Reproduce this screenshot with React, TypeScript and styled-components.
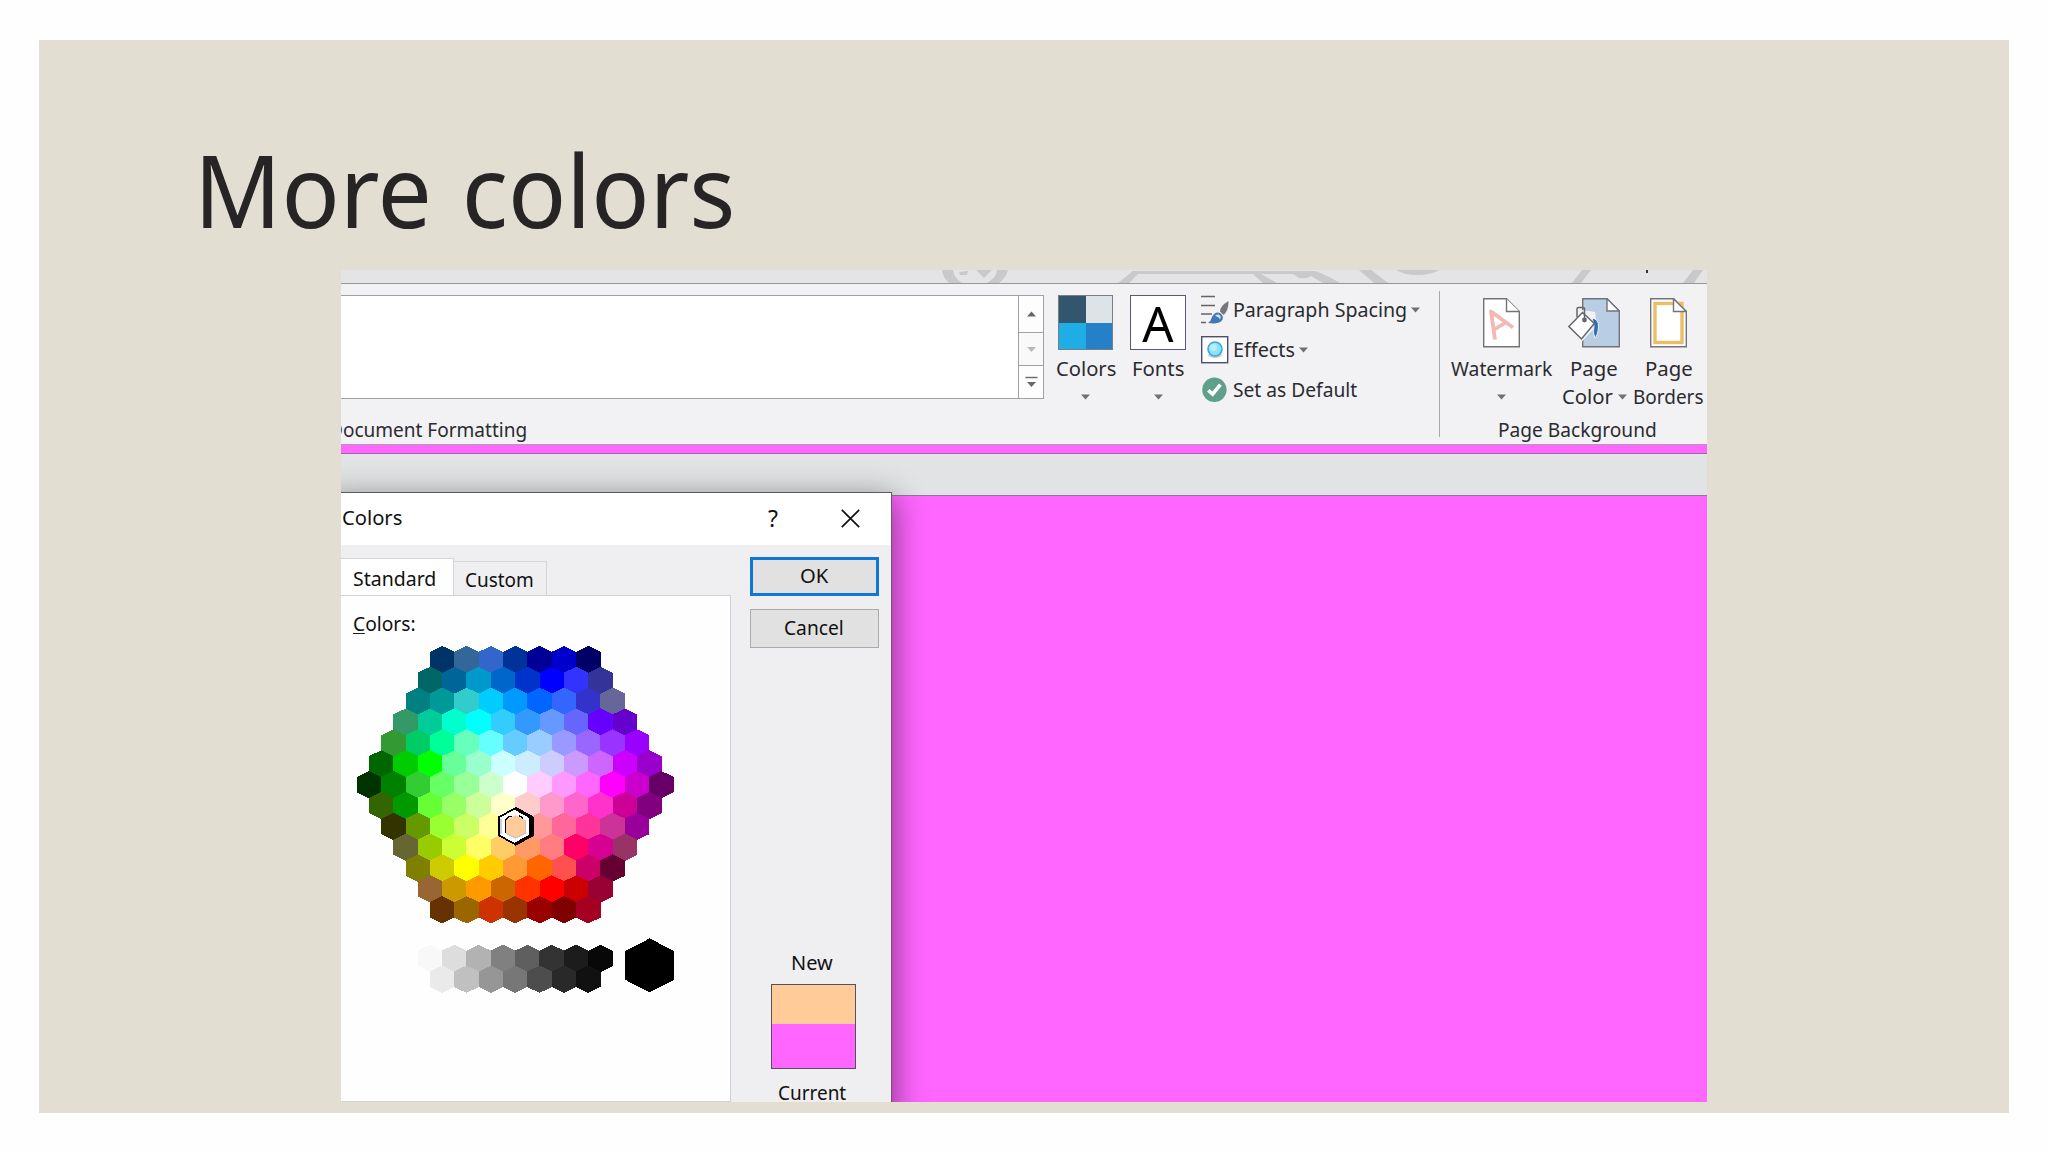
import React, { useLayoutEffect, useRef, useState } from "react";
import styled, { createGlobalStyle } from "styled-components";

const GlobalStyle = createGlobalStyle`
  * { box-sizing: border-box; }
  html, body { margin: 0; padding: 0; background: #fefefe; }
  body { font-family: "Noto Sans", "Open Sans", sans-serif; color: #262626; overflow: hidden; }
`;

const Page = styled.div`
  width: 2048px;
  height: 1152px;
  padding: 40px 39px;
  background: #fefefe;
`;

const Slide = styled.main`
  width: 1970px;
  height: 1073px;
  padding: 89px 0 0 154px;
  background: #e2ded1;
`;

const Title = styled.h1`
  margin: 0 0 21px;
  padding-left: 1px;
  font-size: 101px;
  line-height: 120px;
  font-weight: 400;
  word-spacing: 5px;
  color: #262424;
`;

const Picture = styled.section`
  position: relative;
  width: 1366px;
  height: 832px;
  margin-left: 148px;
  overflow: hidden;
  display: flex;
  flex-direction: column;
  background: #ff66ff;
`;

/* ---------- text fitted to a set width ---------- */

const FitBox = styled.span`
  display: inline-block;
  flex: none;
  white-space: nowrap;
  text-align: left;
`;
const FitInner = styled.span`
  display: inline-block;
  transform-origin: 0 50%;
`;

function Fit({ w, children }: { w: number; children: React.ReactNode }) {
  const ref = useRef<HTMLSpanElement>(null);
  const [scale, setScale] = useState(1);
  useLayoutEffect(() => {
    if (ref.current) setScale(w / ref.current.offsetWidth);
  }, [w]);
  return (
    <FitBox style={{ width: w }}>
      <FitInner ref={ref} style={{ transform: `scaleX(${scale})` }}>
        {children}
      </FitInner>
    </FitBox>
  );
}

/* ---------- ribbon ---------- */

const TopStrip = styled.div`
  flex: none;
  height: 14px;
  background: #e4e4e7;
  border-bottom: 1px solid #97979b;
  svg { display: block; }
`;

const Ribbon = styled.div`
  flex: none;
  height: 161px;
  display: flex;
  background: #f2f2f5;
  border-bottom: 1px solid #a99fae;
  font-size: 19.5px;
  line-height: 28px;
  color: #2b2b2f;
`;

const Group = styled.div<{ $width: number }>`
  width: ${(p) => p.$width}px;
  flex: none;
  padding-top: 11px;
  display: flex;
  flex-direction: column;
`;

const Tools = styled.div<{ $pad?: number }>`
  height: 121px;
  flex: none;
  display: flex;
  padding-left: ${(p) => p.$pad ?? 0}px;
`;

const Caption = styled.div<{ $indent: number }>`
  height: 28px;
  margin-left: ${(p) => p.$indent}px;
`;

const GroupRule = styled.div`
  width: 1px;
  flex: none;
  height: 146px;
  margin-top: 7px;
  background: #a9a9ad;
`;

const Gallery = styled.div`
  width: 703px;
  height: 104px;
  flex: none;
  margin-right: 6px;
  display: flex;
  border: 1px solid #a0a0a5;
  border-left: 0;
  background: #fff;
`;

const Spinner = styled.div`
  margin-left: auto;
  width: 25px;
  display: flex;
  flex-direction: column;
  border-left: 1px solid #a0a0a5;
`;

const SpinButton = styled.div<{ $height: number; $dim?: boolean }>`
  height: ${(p) => p.$height}px;
  display: flex;
  align-items: center;
  justify-content: center;
  background: ${(p) => (p.$dim ? "#f9f9fa" : "#fdfdfd")};
  & + & { border-top: 1px solid #a0a0a5; }
`;

const BigButton = styled.div<{ $width: number }>`
  width: ${(p) => p.$width}px;
  flex: none;
  display: flex;
  flex-direction: column;
  align-items: center;
`;

const IconSlot = styled.div`
  height: 55px;
  margin-bottom: 5px;
  display: flex;
  align-items: center;
  justify-content: center;
`;

const Line = styled.div`
  height: 28px;
  display: flex;
  align-items: center;
  justify-content: center;
  gap: 5px;
`;

const ColorGrid = styled.div`
  width: 55px;
  height: 55px;
  display: grid;
  grid-template-columns: 1fr 1fr;
  grid-template-rows: 1fr 1fr;
  border: 1px solid #7a7d83;
`;
const Tile = styled.span<{ $color: string }>`
  background: ${(p) => p.$color};
`;

const FontTile = styled.div`
  width: 56px;
  height: 55px;
  border: 1px solid #5a5874;
  background: #fff;
  color: #000;
  text-align: center;
  font-size: 49px;
  line-height: 54px;
`;

const CommandList = styled.div`
  margin: -5px 0 0 6px;
  display: flex;
  flex-direction: column;
`;
const Command = styled.div`
  height: 40px;
  display: flex;
  align-items: center;
  gap: 4px;
  svg { flex: none; }
`;
const CommandText = styled.span`
  display: flex;
  align-items: center;
  gap: 4px;
`;

const AccentBar = styled.div`
  flex: none;
  height: 9px;
  background: #ff66ff;
  border-bottom: 1px solid #9a6a9e;
`;
const GrayBar = styled.div`
  flex: none;
  height: 42px;
  background: #e2e3e5;
  border-bottom: 1px solid #8a7a8e;
`;

/* ---------- dialog ---------- */

const Dialog = styled.div`
  position: absolute;
  left: -20px;
  top: 222px;
  width: 571px;
  height: 680px;
  padding-left: 20px;
  display: flex;
  flex-direction: column;
  background: #efeff2;
  border: 1px solid #5a5a5e;
  border-right-color: #76507c;
  box-shadow: 3px 6px 30px rgba(0, 0, 0, 0.46);
  font-size: 19.5px;
  line-height: 28px;
  color: #111;
`;

const TitleBar = styled.header`
  height: 52px;
  flex: none;
  margin-left: -20px;
  padding: 0 31px 2px 20px;
  display: flex;
  align-items: center;
  background: #fff;
`;
const Help = styled.span`
  margin-left: auto;
  margin-right: 63px;
  font-size: 23px;
`;

const DialogBody = styled.div`
  flex: 1;
  display: flex;
  margin-left: -1px;
`;

const TabArea = styled.div`
  width: 390px;
  flex: none;
  padding-top: 13px;
  display: flex;
  flex-direction: column;
`;
const TabRow = styled.div`
  height: 37px;
  display: flex;
  align-items: flex-end;
`;
const ActiveTab = styled.div`
  width: 113px;
  height: 38px;
  padding: 6px 0 0 12px;
  margin-bottom: -1px;
  background: #fff;
  border: 1px solid #d6d6da;
  border-width: 1px 1px 0 0;
`;
const IdleTab = styled.div`
  width: 93px;
  height: 34px;
  padding: 4px 0 0 11px;
  border: 1px solid #d6d6da;
  border-width: 1px 1px 0 0;
`;
const TabPanel = styled.div`
  height: 507px;
  padding: 14px 0 0 12px;
  background: #fefefe;
  border: 1px solid #d2d2d6;
  border-left: 0;
  svg { display: block; margin: 7px 0 0 -12px; }
`;
const Accel = styled.span`
  box-shadow: 0 -1px 0 #222 inset;
  display: inline-block;
  height: 24px;
  line-height: 28px;
`;

const Side = styled.div`
  flex: 1;
  padding: 12px 13px 0 19px;
  display: flex;
  flex-direction: column;
  align-items: center;
`;
const PushButton = styled.div<{ $primary?: boolean }>`
  width: 129px;
  height: 39px;
  flex: none;
  margin-bottom: 13px;
  display: flex;
  align-items: center;
  justify-content: center;
  padding: 0 1px 1px 0;
  background: #e1e1e2;
  border: ${(p) => (p.$primary ? "3px solid #0e78d4" : "1px solid #aaaaad")};
`;
const Preview = styled.div`
  margin-top: 288px;
  margin-left: -5px;
  display: flex;
  flex-direction: column;
  align-items: center;
`;
const Swatch = styled.div`
  width: 85px;
  height: 85px;
  margin: 7px 0 10px 3px;
  border: 1px solid #55505c;
  background: linear-gradient(#ffcc99 0 39px, #ff66ff 39px);
`;

/* ---------- drawings ---------- */

function Arrow({ up, dim, bar }: { up?: boolean; dim?: boolean; bar?: boolean }) {
  const c = dim ? "#b9b9bd" : "#68686c";
  return (
    <svg width="13" height="14" viewBox="0 0 13 14">
      {bar && <path d="M0.5 2.5H12.5" stroke={c} strokeWidth="1.4" />}
      <path d={up ? "M2 9.5H11L6.5 4.5Z" : bar ? "M2 7H11L6.5 12Z" : "M2 5H11L6.5 10Z"} fill={c} />
    </svg>
  );
}

function SmallArrow() {
  return (
    <svg width="9" height="6" viewBox="0 0 9 6">
      <path d="M0 0.5H9L4.5 5.5Z" fill="#707074" />
    </svg>
  );
}

function StripArt() {
  return (
    <svg width="1366" height="13" viewBox="0 0 1366 13" fill="none">
      <g fill="#c9c9cc">
        <path d="M601 0H612Q613 8 621 13H608Q602 8 601 0Z" />
        <path d="M618 2L627 1L626 5L619 5Z" />
        <path d="M635 0H651L643 8Z" />
        <path d="M656 0H667Q665 8 658 13H646Q655 8 656 0Z" />
        <path d="M777 13L792 1H974Q986 5 999 13H982L970 6Q966 9 958 8L952 4H920L936 13H922L912 4H797L788 13Z" />
        <path d="M1018 0H1030L1047 13H1033Z" />
        <path d="M1055 0H1098Q1090 5 1076 5Q1063 5 1055 0Z" />
        <path d="M1231 13L1241 0H1250L1240 13Z" />
        <path d="M1342 13L1352 0H1362L1353 13Z" />
      </g>
      <path d="M1306 0V3" stroke="#333" strokeWidth="2" />
    </svg>
  );
}

function ParagraphIcon() {
  return (
    <svg width="28" height="30" viewBox="0 0 28 30" fill="none">
      <path d="M0 1.5H14M0 10.5H14M0 19H11M0 27.5H5" stroke="#66666a" strokeWidth="1.6" />
      <path d="M27.5 6Q19 11 19 16.5L22.5 20Q27.5 16 27.5 6Z" fill="#77777b" />
      <path d="M7 28Q10 26 11 22Q14 16 19 18Q24 22 20.5 26Q17 29.5 7 28Z" fill="#4277b3" />
      <path d="M14 21Q17 18.5 19 20.5Q20.5 22 19 24.5Q18 21.5 14 21Z" fill="#d9e8f5" />
    </svg>
  );
}

function EffectsIcon() {
  return (
    <svg width="28" height="28" viewBox="0 0 28 28">
      <rect x="0.7" y="0.7" width="26" height="26" fill="#fff" stroke="#4f4d6c" strokeWidth="1.4" />
      <ellipse cx="14" cy="19" rx="7" ry="3" fill="#cfcfd4" />
      <circle cx="14" cy="13" r="7" fill="#8fe0fb" stroke="#38a9dd" strokeWidth="1.6" />
      <circle cx="12.5" cy="11.5" r="3.6" fill="#b5effd" />
    </svg>
  );
}

function CheckIcon() {
  return (
    <svg width="28" height="26" viewBox="0 0 28 26">
      <circle cx="13.4" cy="12.8" r="12.2" fill="#5fa08a" />
      <path d="M7.3 13.2L11.6 17.2L19.4 7.6" fill="none" stroke="#fff" strokeWidth="3.6" />
    </svg>
  );
}

function WatermarkIcon() {
  return (
    <svg width="37" height="50" viewBox="0 0 37 50" fill="none">
      <path d="M0.7 0.7H23.5L36.3 13.5V48.8H0.7Z" fill="#fff" stroke="#737377" strokeWidth="1.4" />
      <path d="M23.5 0.7V13.5H36.3" fill="#fff" stroke="#737377" strokeWidth="1.4" />
      <path d="M12 41.5L8 13.5L30 29.5M10.5 32L23.5 24" stroke="#f2b8b1" strokeWidth="3.8" strokeLinejoin="round" />
    </svg>
  );
}

function PageColorIcon() {
  return (
    <svg width="52" height="50" viewBox="0 0 52 50" fill="none">
      <path d="M14.7 0.7H39L51.3 13V48.8H14.7Z" fill="#b9cee4" stroke="#737377" strokeWidth="1.4" />
      <path d="M39 0.7V13H51.3Z" fill="#fff" stroke="#737377" strokeWidth="1.4" />
      <path d="M13 42L29 28L27 14L14 12Z" fill="#f2f2f5" />
      <path d="M-1 29L13 13L29 27L13.5 44Z" fill="#f2f2f5" />
      <path d="M24 20Q31 21 30.5 29Q30 37 27 40Q24 34 26 28Z" fill="#2a72b5" stroke="#f2f2f5" strokeWidth="1" />
      <path d="M0.9 28.5L14.5 14.5L26.3 25.5L13.5 41Z" fill="#fff" stroke="#66666a" strokeWidth="1.5" />
      <path d="M9 19V11Q9 9.5 10.5 9.5H15Q16.5 9.5 16.5 11V21" stroke="#66666a" strokeWidth="1.5" />
      <circle cx="16.5" cy="22" r="2.4" fill="#66666a" />
    </svg>
  );
}

function PageBordersIcon() {
  return (
    <svg width="37" height="50" viewBox="0 0 37 50" fill="none">
      <path d="M0.7 0.7H23.5L36.3 13.5V48.8H0.7Z" fill="#fff" stroke="#737377" strokeWidth="1.4" />
      <rect x="5" y="5.5" width="27" height="39" stroke="#ecbd6a" strokeWidth="3.4" />
      <path d="M23.5 0.7V13.5H36.3Z" fill="#fff" stroke="#737377" strokeWidth="1.4" />
    </svg>
  );
}

function CloseIcon() {
  return (
    <svg width="19" height="19" viewBox="0 0 19 19">
      <path d="M0.8 0.8L18.2 18.2M18.2 0.8L0.8 18.2" stroke="#111" strokeWidth="1.7" />
    </svg>
  );
}

const honeycomb = [
  "003366 336699 3366cc 003399 000099 0000cc 000066",
  "006666 006699 0099cc 0066cc 0033cc 0000ff 3333ff 333399",
  "008080 009999 33cccc 00ccff 0099ff 0066ff 3366ff 3333cc 666699",
  "339966 00cc99 00ffcc 00ffff 33ccff 3399ff 6699ff 6666ff 6600ff 6600cc",
  "339933 00cc66 00ff99 66ffbb 66ffff 66ccff 99ccff 9999ff 9966ff 9933ff 9900ff",
  "006600 00cc00 00ff00 66ff99 99ffcc ccffff ccecff ccccff cc99ff cc66ff cc00ff 9900cc",
  "003300 008000 33cc33 66ff66 99ff99 ccffcc ffffff ffccff ff99ff ff66ff ff00ff cc00cc 660066",
  "336600 009900 66ff33 99ff66 ccff99 ffffcc ffcccc ff99cc ff66cc ff33cc cc0099 800080",
  "333300 669900 99ff33 ccff66 ffff99 ffcc99 ff9999 ff6699 ff3399 cc3399 990099",
  "666633 99cc00 ccff33 ffff66 ffcc66 ff9966 ff7c80 ff0066 d60093 993366",
  "808000 cccc00 ffff00 ffcc00 ff9933 ff6600 ff5050 cc0066 660033",
  "996633 cc9900 ff9900 cc6600 ff3300 ff0000 cc0000 990033",
  "663300 996600 cc3300 993300 990000 800000 a50021",
].map((row) => row.split(" "));

const grays = [
  "f8f8f8 dddddd b2b2b2 808080 5f5f5f 333333 1c1c1c 080808",
  "eaeaea c0c0c0 969696 777777 4d4d4d 292929 111111",
].map((row) => row.split(" "));

const hex = (cx: number, cy: number, rx: number, ry: number, side: number) =>
  [
    [cx, cy - ry],
    [cx + rx, cy - side],
    [cx + rx, cy + side],
    [cx, cy + ry],
    [cx - rx, cy + side],
    [cx - rx, cy - side],
  ]
    .map((p) => p.join(","))
    .join(" ");

const PITCH = 24.35;
const ROW = 20.85;

function HexRows({ rows, cx, top }: { rows: string[][]; cx: number; top: number }) {
  return (
    <>
      {rows.map((row, r) =>
        row.map((c, i) => (
          <polygon
            key={`${r}-${i}`}
            points={hex(cx + (i - (row.length - 1) / 2) * PITCH, top + r * ROW, 12.3, 13.7, 7.7)}
            fill={`#${c}`}
          />
        ))
      )}
    </>
  );
}

/* Origin of the drawing is the top left corner of the honeycomb area. */
function Palette() {
  return (
    <svg width="380" height="360" viewBox="341 645 380 360" shapeRendering="crispEdges">
      <HexRows rows={honeycomb} cx={515.3} top={659.6} />
      <HexRows rows={grays} cx={515.2} top={958.4} />
      <polygon points={hex(649.6, 965.4, 24.2, 27, 14.5)} fill="#000" />
      <polygon points={hex(515.9, 826.3, 18, 19.5, 9.5)} fill="#000" />
      <polygon points={hex(514.3, 826.3, 14.8, 16.6, 8.4)} fill="#fff" />
      <path d="M500.8 819V834" stroke="#d4d0d4" strokeWidth="2.5" />
      <polygon points={hex(515.5, 826.3, 9.6, 11, 6.5)} fill="#ffcc99" />
      <path d="M505.5 833V819.5L509.5 816.5H512M519 815.5L523 818" fill="none" stroke="#000" strokeWidth="1.5" />
      <path d="M525.5 820V833L515.3 838L506 833" fill="none" stroke="#c9c5c9" strokeWidth="1.3" />
    </svg>
  );
}

export default function App() {
  return (
    <>
      <GlobalStyle />
      <Page>
        <Slide>
          <Title><Fit w={541}>More colors</Fit></Title>
          <Picture>
            <TopStrip><StripArt /></TopStrip>
            <Ribbon>
              <Group $width={1098}>
                <Tools>
                  <Gallery>
                    <Spinner>
                      <SpinButton $height={36}><Arrow up /></SpinButton>
                      <SpinButton $height={33} $dim><Arrow dim /></SpinButton>
                      <SpinButton $height={33}><Arrow bar /></SpinButton>
                    </Spinner>
                  </Gallery>
                  <BigButton $width={71}>
                    <IconSlot>
                      <ColorGrid>
                        <Tile $color="#32566e" />
                        <Tile $color="#dde3e6" />
                        <Tile $color="#1eade4" />
                        <Tile $color="#2680c8" />
                      </ColorGrid>
                    </IconSlot>
                    <Line><Fit w={60}>Colors</Fit></Line>
                    <Line><SmallArrow /></Line>
                  </BigButton>
                  <BigButton $width={74}>
                    <IconSlot><FontTile>A</FontTile></IconSlot>
                    <Line><Fit w={52}>Fonts</Fit></Line>
                    <Line><SmallArrow /></Line>
                  </BigButton>
                  <CommandList>
                    <Command>
                      <ParagraphIcon />
                      <CommandText><Fit w={174}>Paragraph Spacing</Fit><SmallArrow /></CommandText>
                    </Command>
                    <Command>
                      <EffectsIcon />
                      <CommandText><Fit w={62}>Effects</Fit><SmallArrow /></CommandText>
                    </Command>
                    <Command>
                      <CheckIcon />
                      <CommandText><Fit w={124}>Set as Default</Fit></CommandText>
                    </Command>
                  </CommandList>
                </Tools>
                <Caption $indent={-12}><Fit w={198}>Document Formatting</Fit></Caption>
              </Group>
              <GroupRule />
              <Group $width={267}>
                <Tools $pad={6}>
                  <BigButton $width={111}>
                    <IconSlot><WatermarkIcon /></IconSlot>
                    <Line><Fit w={101}>Watermark</Fit></Line>
                    <Line><SmallArrow /></Line>
                  </BigButton>
                  <BigButton $width={74}>
                    <IconSlot><PageColorIcon /></IconSlot>
                    <Line><Fit w={48}>Page</Fit></Line>
                    <Line><Fit w={51}>Color</Fit><SmallArrow /></Line>
                  </BigButton>
                  <BigButton $width={75}>
                    <IconSlot><PageBordersIcon /></IconSlot>
                    <Line><Fit w={48}>Page</Fit></Line>
                    <Line><Fit w={71}>Borders</Fit></Line>
                  </BigButton>
                </Tools>
                <Caption $indent={58}><Fit w={159}>Page Background</Fit></Caption>
              </Group>
            </Ribbon>
            <AccentBar />
            <GrayBar />
            <Dialog>
              <TitleBar>
                <Fit w={60}>Colors</Fit>
                <Help>?</Help>
                <CloseIcon />
              </TitleBar>
              <DialogBody>
                <TabArea>
                  <TabRow>
                    <ActiveTab><Fit w={83}>Standard</Fit></ActiveTab>
                    <IdleTab><Fit w={69}>Custom</Fit></IdleTab>
                  </TabRow>
                  <TabPanel>
                    <Fit w={63}><Accel>C</Accel>olors:</Fit>
                    <Palette />
                  </TabPanel>
                </TabArea>
                <Side>
                  <PushButton $primary><Fit w={28}>OK</Fit></PushButton>
                  <PushButton><Fit w={60}>Cancel</Fit></PushButton>
                  <Preview>
                    <Fit w={42}>New</Fit>
                    <Swatch />
                    <Fit w={68}>Current</Fit>
                  </Preview>
                </Side>
              </DialogBody>
            </Dialog>
          </Picture>
        </Slide>
      </Page>
    </>
  );
}
